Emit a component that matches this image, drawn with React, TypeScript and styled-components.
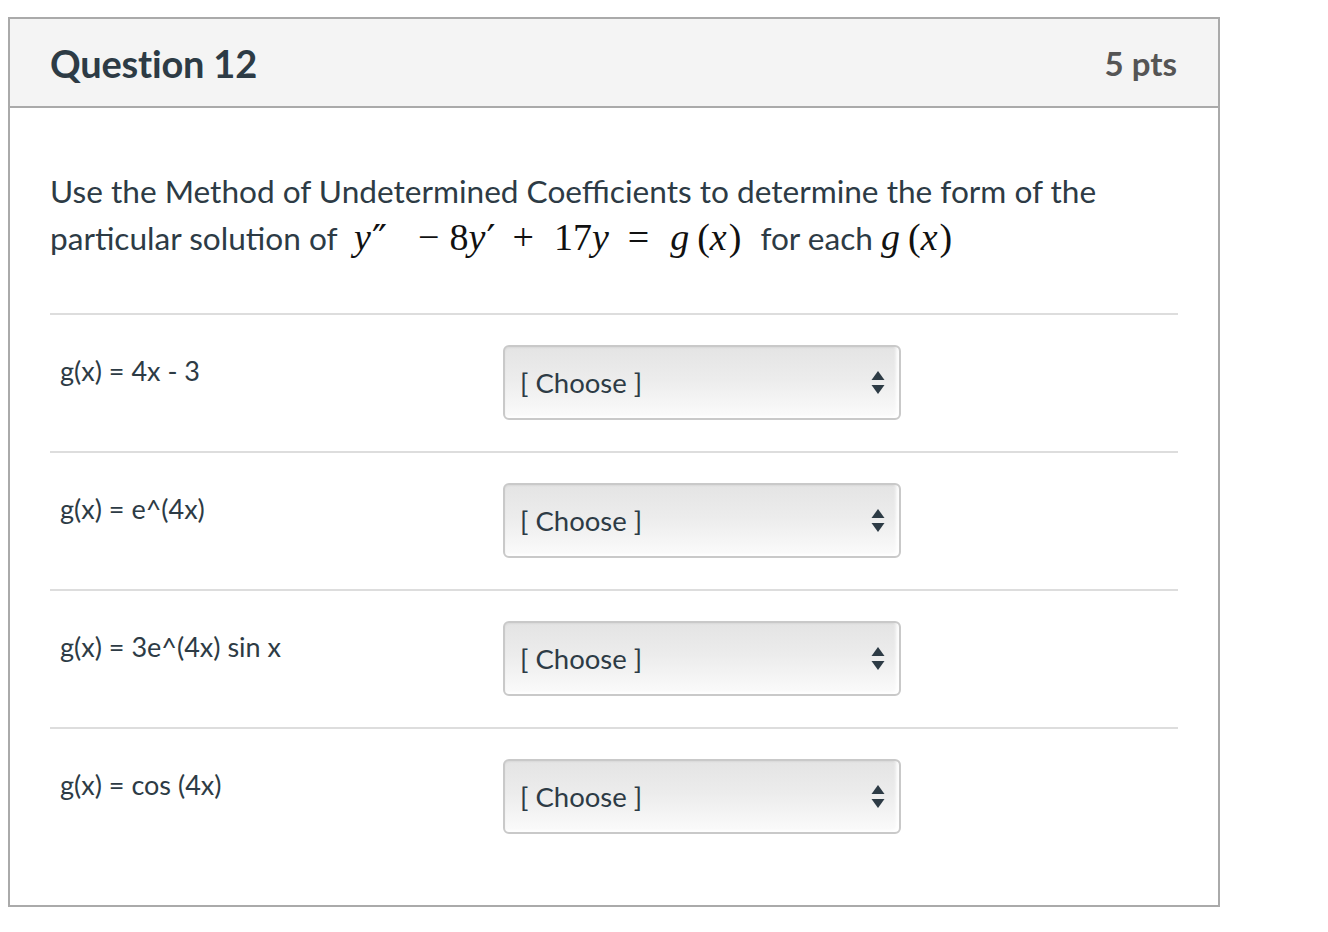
import React from "react";
import styled, { createGlobalStyle } from "styled-components";

const Global = createGlobalStyle`
  html, body { margin: 0; padding: 0; background: #ffffff; }
  body { font-family: Lato, "Noto Sans", sans-serif; color: #2d3b45; }
`;

const Page = styled.div`
  padding: 17px 0 0 8px;
`;

const Card = styled.section`
  width: 1212px;
  box-sizing: border-box;
  border: 2px solid #aaaaaa;
  background: #ffffff;
`;

const Header = styled.header`
  height: 87px;
  box-sizing: content-box;
  background: #f4f4f4;
  border-bottom: 2px solid #aaaaaa;
  display: flex;
  align-items: center;
  justify-content: space-between;
  padding: 0 41px 0 40px;
`;

const Title = styled.h2`
  margin: 0;
  font-size: 38px;
  font-weight: 700;
  color: #2d3b45;
  letter-spacing: -0.2px;
`;

const Points = styled.div`
  font-size: 33px;
  font-weight: 700;
  color: #555555;
`;

const Body = styled.div`
  padding: 60px 40px 71px 40px;
`;

const Prompt = styled.p`
  margin: 0 0 51px 0;
  font-size: 31.6px;
  line-height: 47px;
  color: #2d3b45;
`;

const MathRun = styled.span<{ gapLeft?: number; gapRight?: number }>`
  font-family: "Liberation Serif", "Times New Roman", serif;
  font-size: 38px;
  line-height: 1;
  white-space: nowrap;
  color: #111111;
  margin: 0 ${(p) => p.gapRight ?? 0}px 0 ${(p) => p.gapLeft ?? 0}px;
`;

const Mi = styled.i`
  font-style: italic;
`;

const Mn = styled.span`
  font-style: normal;
`;

const Mo = styled.span<{ l: number; r: number }>`
  font-style: normal;
  margin: 0 ${(p) => p.r}px 0 ${(p) => p.l}px;
`;

const Prime = styled.span<{ after?: number }>`
  font-family: "DejaVu Sans", sans-serif;
  font-style: normal;
  font-size: 1.05em;
  vertical-align: -0.08em;
  line-height: 0;
  margin: 0 ${(p) => p.after ?? 0}px 0 1px;
  letter-spacing: -3px;
`;

const Paren = styled.span<{ pre?: number; post?: number }>`
  font-style: normal;
  margin: 0 ${(p) => p.post ?? 0}px 0 ${(p) => p.pre ?? 0}px;
`;

const Row = styled.div`
  display: grid;
  grid-template-columns: 453px 398px;
  align-items: start;
  border-top: 2px solid #dddddd;
  padding: 30px 0 31px 0;
  &:last-child {
    padding-bottom: 0;
  }
`;

const Label = styled.div`
  padding: 8px 0 0 10px;
  font-size: 27px;
  line-height: 36px;
  color: #2d3b45;
`;

const Select = styled.div`
  height: 75px;
  box-sizing: border-box;
  border: 2px solid #c9c9c9;
  border-radius: 6px;
  background: linear-gradient(#e4e4e4, #ececec 45%, #fbfbfb);
  box-shadow: inset -3px -2px 3px rgba(255, 255, 255, 0.9), inset 0 1px 2px rgba(0, 0, 0, 0.06);
  display: flex;
  align-items: center;
  justify-content: space-between;
  padding: 0 14px 0 15px;
`;

const SelectText = styled.span`
  font-size: 27.5px;
  color: #2d3b45;
`;

const Arrows = () => (
  <svg width="14" height="26" viewBox="0 0 14 26">
    <polygon points="7,1 13.5,10 0.5,10" fill="#2d3b45" />
    <polygon points="0.5,15 13.5,15 7,24" fill="#2d3b45" />
  </svg>
);

const GofX = () => (
  <>
    <Mi>g</Mi>
    <Paren pre={8}>(</Paren>
    <Mi>x</Mi>
    <Paren pre={2}>)</Paren>
  </>
);

const rows = ["g(x) = 4x - 3", "g(x) = e^(4x)", "g(x) = 3e^(4x) sin x", "g(x) = cos (4x)"];

export default function App() {
  return (
    <>
      <Global />
      <Page>
        <Card>
          <Header>
            <Title>Question 12</Title>
            <Points>5 pts</Points>
          </Header>
          <Body>
            <Prompt>
              Use the Method of Undetermined Coefficients to determine the form of the particular solution of{" "}
              <MathRun gapLeft={9} gapRight={19}>
                <Mi>y</Mi>
                <Prime>′′</Prime>
                <Mo l={34} r={10}>−</Mo>
                <Mn>8</Mn>
                <Mi>y</Mi>
                <Prime after={8}>′</Prime>
                <Mo l={12} r={20}>+</Mo>
                <Mn>17</Mn>
                <Mi>y</Mi>
                <Mo l={19} r={21}>=</Mo>
                <GofX />
              </MathRun>
              for each{" "}
              <MathRun>
                <GofX />
              </MathRun>
            </Prompt>
            {rows.map((r) => (
              <Row key={r}>
                <Label>{r}</Label>
                <Select>
                  <SelectText>[ Choose ]</SelectText>
                  <Arrows />
                </Select>
              </Row>
            ))}
          </Body>
        </Card>
      </Page>
    </>
  );
}
